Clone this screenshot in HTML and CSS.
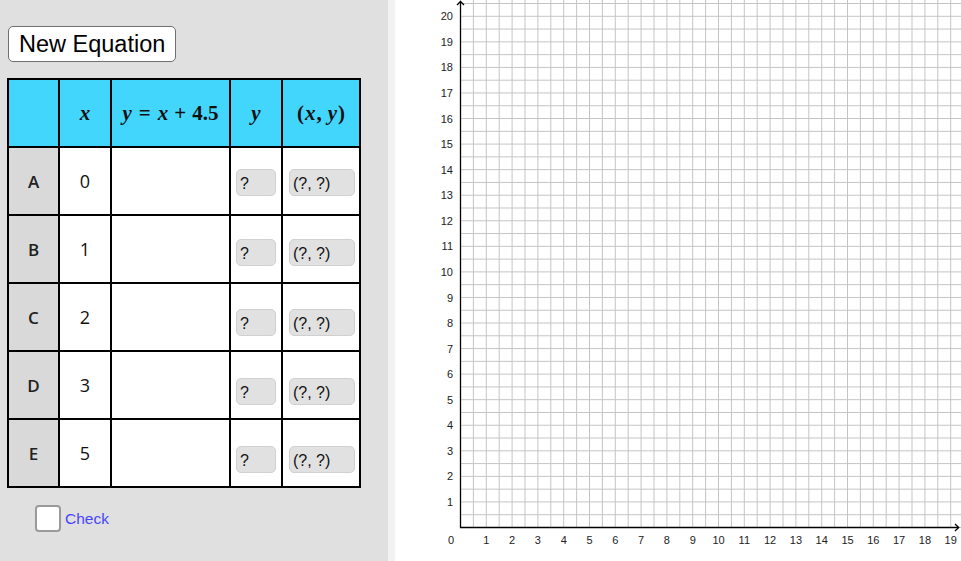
FILE: index.html
```html
<!DOCTYPE html>
<html>
<head>
<meta charset="utf-8">
<link rel="stylesheet" href="styles.css">
</head>
<body>
<div class="app">
  <div class="left">
    <button class="btn">New Equation</button>
    <table class="tbl">
      <tr class="head">
        <td class="c1"></td>
        <td class="c2"><span class="m">x</span></td>
        <td class="c3"><span class="m">y</span><span class="op">=</span><span class="m">x</span><span class="op op2">+</span><span class="num">4.5</span></td>
        <td class="c4"><span class="m">y</span></td>
        <td class="c5"><span class="pb">(</span><span class="m">x</span><span class="pb comma">,</span><span class="m">y</span><span class="pb">)</span></td>
      </tr>
      <tr>
        <td class="lab">A</td><td class="xv">0</td><td class="eq"></td>
        <td class="yc"><div class="box qb">?</div></td>
        <td class="pc"><div class="box pt">(?, ?)</div></td>
      </tr>
      <tr>
        <td class="lab">B</td><td class="xv">1</td><td class="eq"></td>
        <td class="yc r2"><div class="box qb">?</div></td>
        <td class="pc r2"><div class="box pt">(?, ?)</div></td>
      </tr>
      <tr>
        <td class="lab">C</td><td class="xv">2</td><td class="eq"></td>
        <td class="yc r3"><div class="box qb">?</div></td>
        <td class="pc r3"><div class="box pt">(?, ?)</div></td>
      </tr>
      <tr>
        <td class="lab">D</td><td class="xv">3</td><td class="eq"></td>
        <td class="yc r4"><div class="box qb">?</div></td>
        <td class="pc r4"><div class="box pt">(?, ?)</div></td>
      </tr>
      <tr>
        <td class="lab">E</td><td class="xv">5</td><td class="eq"></td>
        <td class="yc r4"><div class="box qb">?</div></td>
        <td class="pc r4"><div class="box pt">(?, ?)</div></td>
      </tr>
    </table>
    <label class="check"><span class="cbox"></span><span class="ctext">Check</span></label>
  </div>
  <div class="strip"></div>
  <div class="graph">
    <svg width="566" height="561" viewBox="0 0 566 561">
      <defs>
        <pattern id="grid" x="65" y="527" width="12.9" height="12.78" patternUnits="userSpaceOnUse">
          <rect x="0" y="0" width="1" height="12.78" fill="#c4c4c4"/>
          <rect x="0" y="0" width="12.9" height="1" fill="#c4c4c4"/>
        </pattern>
      </defs>
      <rect x="65" y="0" width="501" height="528" fill="url(#grid)"/>
      <g stroke="#000" stroke-width="1.3" fill="none">
        <line x1="65.5" y1="1.5" x2="65.5" y2="528"/>
        <line x1="65" y1="527.5" x2="563.7" y2="527.5"/>
        <polyline points="62,5 65.5,1.5 69,5"/>
        <polyline points="560,524 563.7,527.5 560,531"/>
      </g>
      <g class="lbl" text-anchor="end">
        <text x="58" y="505.9">1</text>
        <text x="58" y="480.4">2</text>
        <text x="58" y="454.8">3</text>
        <text x="58" y="429.3">4</text>
        <text x="58" y="403.7">5</text>
        <text x="58" y="378.1">6</text>
        <text x="58" y="352.6">7</text>
        <text x="58" y="327.0">8</text>
        <text x="58" y="301.5">9</text>
        <text x="58" y="275.9">10</text>
        <text x="58" y="250.3">11</text>
        <text x="58" y="224.8">12</text>
        <text x="58" y="199.2">13</text>
        <text x="58" y="173.7">14</text>
        <text x="58" y="148.1">15</text>
        <text x="58" y="122.5">16</text>
        <text x="58" y="97.0">17</text>
        <text x="58" y="71.4">18</text>
        <text x="58" y="45.9">19</text>
        <text x="58" y="20.3">20</text>
      </g>
      <g class="lbl" text-anchor="middle">
        <text x="56" y="544">0</text>
        <text x="91.3" y="544">1</text>
        <text x="117.1" y="544">2</text>
        <text x="142.9" y="544">3</text>
        <text x="168.7" y="544">4</text>
        <text x="194.5" y="544">5</text>
        <text x="220.3" y="544">6</text>
        <text x="246.1" y="544">7</text>
        <text x="271.9" y="544">8</text>
        <text x="297.7" y="544">9</text>
        <text x="323.5" y="544">10</text>
        <text x="349.3" y="544">11</text>
        <text x="375.1" y="544">12</text>
        <text x="400.9" y="544">13</text>
        <text x="426.7" y="544">14</text>
        <text x="452.5" y="544">15</text>
        <text x="478.3" y="544">16</text>
        <text x="504.1" y="544">17</text>
        <text x="529.9" y="544">18</text>
        <text x="555.7" y="544">19</text>
      </g>
    </svg>
  </div>
</div>
</body>
</html>
```
FILE: styles.css
```css
html, body {
  margin: 0;
  padding: 0;
  background: #fff;
}
.app {
  display: flex;
  width: 961px;
  height: 561px;
  overflow: hidden;
}
.left {
  width: 388px;
  flex: none;
  background: #e0e0e0;
  padding: 26px 0 0 7px;
  box-sizing: border-box;
  display: flex;
  flex-direction: column;
  align-items: flex-start;
}
.btn {
  margin: 0 0 0 1px;
  width: 168px;
  height: 36px;
  box-sizing: border-box;
  border: 1px solid #707070;
  border-radius: 5px;
  background: #fff;
  color: #000;
  font-family: "Liberation Sans", Arial, sans-serif;
  font-size: 23.5px;
  line-height: 30px;
  padding: 2px 0 2px 10px;
  text-align: left;
  white-space: nowrap;
}
.tbl {
  margin-top: 16px;
  border-collapse: separate;
  border-spacing: 2px;
  background: #000;
  table-layout: fixed;
}
.tbl td {
  padding: 0;
  height: 66px;
  background: #fff;
  text-align: center;
  vertical-align: middle;
  box-sizing: border-box;
}
.tbl .head td {
  background: #43d6fd;
  font-family: "Liberation Serif", "Times New Roman", serif;
  font-size: 21px;
  font-weight: bold;
  color: #111;
  white-space: nowrap;
}
.c1 { width: 49px; }
.c2 { width: 50px; }
.c3 { width: 117px; }
.c4 { width: 50px; }
.c5 { width: 76px; }
.m { font-style: italic; }
.comma { margin-right: 5px; }
.c5 .m { margin: 0 1px; }
.op { margin: 0 7px; }
.op2 { margin: 0 6px; }
.tbl td.lab {
  background: #d9d9d9;
  font-family: "Open Sans", "Noto Sans", sans-serif;
  font-size: 17px;
  font-weight: 600;
  color: #222;
}
.tbl td.xv {
  font-family: "Open Sans", "Noto Sans", sans-serif;
  font-size: 18px;
  font-weight: 400;
  color: #111;
}
.tbl td.yc, .tbl td.pc {
  vertical-align: top;
  text-align: left;
  padding-top: 21px;
  padding-left: 5px;
}
.tbl td.pc { padding-left: 6px; }
.tbl td.r2 { padding-top: 23px; }
.tbl td.r3 { padding-top: 25px; }
.tbl td.r4 { padding-top: 26px; }
.box {
  box-sizing: border-box;
  height: 27px;
  background: #e1e1e1;
  border: 1px solid #d0d0d0;
  border-radius: 5px;
  font-family: "Liberation Sans", Arial, sans-serif;
  font-size: 16px;
  line-height: 18px;
  padding: 5px 3px 2px 3px;
  color: #111;
  white-space: nowrap;
}
.qb { width: 40px; }
.pt { width: 66px; }
.check {
  display: flex;
  align-items: center;
  margin: 17px 0 0 28px;
}
.cbox {
  width: 26px;
  height: 27px;
  box-sizing: border-box;
  border: 2px solid #9a9a9a;
  border-radius: 4px;
  background: #fff;
}
.ctext {
  margin-left: 4px;
  font-family: "Liberation Sans", Arial, sans-serif;
  font-size: 15.5px;
  color: #4646ff;
}
.strip {
  width: 7px;
  flex: none;
  background: #f2f2f2;
}
.graph {
  flex: 1;
  background: #fff;
}
.graph svg {
  display: block;
}
.lbl text {
  font-family: "Liberation Sans", Arial, sans-serif;
  font-size: 11px;
  fill: #222;
}
```
